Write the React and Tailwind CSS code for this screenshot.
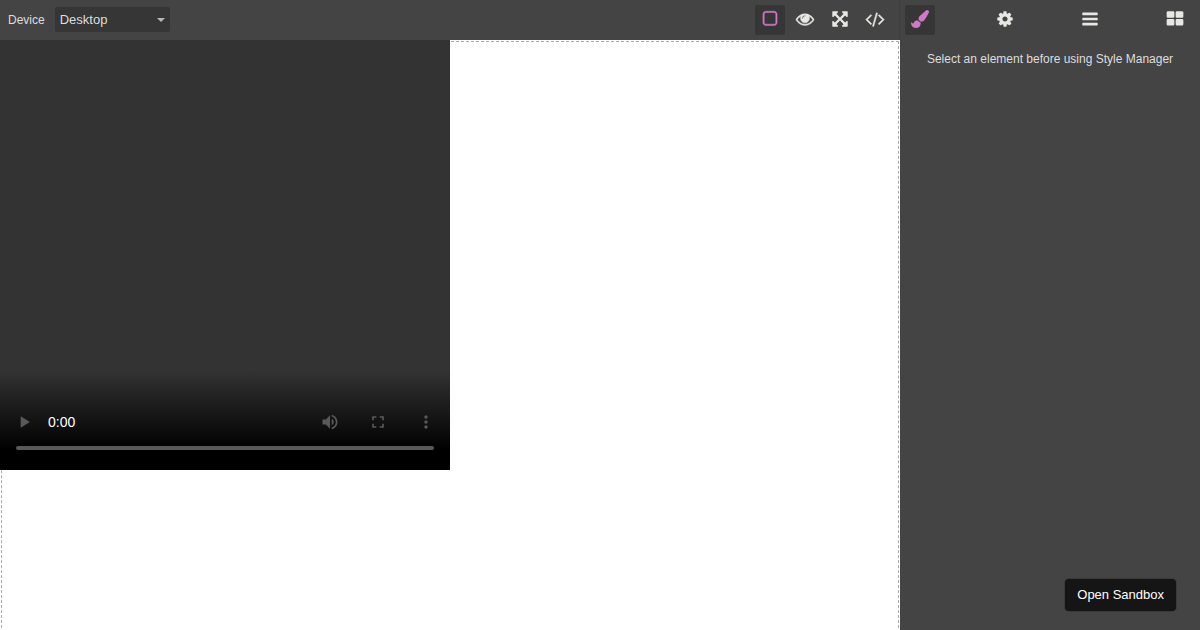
import React, { useState } from 'react';

const PATHS = {
  border:
    'M1312 256h-832q-66 0-113 47t-47 113v832q0 66 47 113t113 47h832q66 0 113-47t47-113v-832q0-66-47-113t-113-47zm288 160v832q0 119-84.5 203.5t-203.5 84.5h-832q-119 0-203.5-84.5t-84.5-203.5v-832q0-119 84.5-203.5t203.5-84.5h832q119 0 203.5 84.5t84.5 203.5z',
  eye:
    'M1664 960q-152-236-381-353 61 104 61 225 0 185-131.5 316.5t-316.5 131.5-316.5-131.5-131.5-316.5q0-121 61-225-229 117-381 353 133 205 333.5 326.5t434.5 121.5 434.5-121.5 333.5-326.5zm-720-384q0-20-14-34t-34-14q-125 0-214.5 89.5t-89.5 214.5q0 20 14 34t34 14 34-14 14-34q0-86 61-147t147-61q20 0 34-14t14-34zm848 384q0 34-20 69-140 230-376.5 368.5t-499.5 138.5-499.5-139-376.5-368q-20-35-20-69t20-69q140-229 376.5-368t499.5-139 499.5 139 376.5 368q20 35 20 69z',
  expand:
    'M1411 541l-355 355 355 355 144-144q29-31 70-14 39 17 39 59v448q0 26-19 45t-45 19h-448q-42 0-59-40-17-39 14-69l144-144-355-355-355 355 144 144q31 30 14 69-17 40-59 40h-448q-26 0-45-19t-19-45v-448q0-42 40-59 39-17 69 14l144 144 355-355-355-355-144 144q-19 19-45 19-12 0-24-5-40-17-40-59v-448q0-26 19-45t45-19h448q42 0 59 40 17 39-14 69l-144 144 355 355 355-355-144-144q-31-30-14-69 17-40 59-40h448q26 0 45 19t19 45v448q0 42-39 59-13 5-25 5-26 0-45-19z',
  code:
    'M553 1399l-50 50q-10 10-23 10t-23-10l-466-466q-10-10-10-23t10-23l466-466q10-10 23-10t23 10l50 50q10 10 10 23t-10 23l-393 393 393 393q10 10 10 23t-10 23zm591-1067l-373 1291q-4 13-15.5 19.5t-23.5 2.5l-62-17q-13-4-19.5-15.5t-2.5-24.5l373-1291q4-13 15.5-19.5t23.5-2.5l62 17q13 4 19.5 15.5t2.5 24.5zm657 651l-466 466q-10 10-23 10t-23-10l-50-50q-10-10-10-23t10-23l393-393-393-393q-10-10-10-23t10-23l50-50q10-10 23-10t23 10l466 466q10 10 10 23t-10 23z',
  brush:
    'M1615 0q70 0 122.5 46.5t52.5 116.5q0 63-45 151-332 629-465 752-97 91-218 91-126 0-216.5-92.5t-90.5-219.5q0-128 92-212l638-579q59-54 130-54zm-909 1034q39 76 106.5 130t150.5 76l1 71q4 213-129.5 347t-348.5 134q-123 0-218-46.5t-152.5-127.5-86.5-183-29-220q7 5 41 30t62 44.5 59 36.5 46 17q41 0 55-37 25-66 57.5-112.5t69.5-76 88-47.5 103-25.5 125-10.5z',
  cog:
    'M1152 896q0-106-75-181t-181-75-181 75-75 181 75 181 181 75 181-75 75-181zm512-109v222q0 12-8 23t-20 13l-185 28q-19 54-39 91 35 50 107 138 10 12 10 25t-9 23q-27 37-99 108t-94 71q-12 0-26-9l-138-108q-44 23-91 38-16 136-29 186-7 28-36 28h-222q-14 0-24.5-8.5t-11.5-21.5l-28-184q-49-16-90-37l-141 107q-10 9-25 9-14 0-25-11-126-114-165-168-7-10-7-23 0-12 8-23 15-21 51-66.5t54-70.5q-27-50-41-99l-183-27q-13-2-21-12.5t-8-23.5v-222q0-12 8-23t19-13l186-28q14-46 39-92-40-57-107-138-10-12-10-24 0-10 9-23 26-36 98.5-107.5t94.5-71.5q13 0 26 10l138 107q44-23 91-38 16-136 29-186 7-28 36-28h222q14 0 24.5 8.5t11.5 21.5l28 184q49 16 90 37l142-107q9-9 24-9 13 0 25 10 129 119 165 170 7 8 7 22 0 12-8 23-15 21-51 66.5t-54 70.5q26 50 41 98l183 28q13 2 21 12.5t8 23.5z',
  bars:
    'M192 256h1408q64 0 64 64v128q0 64-64 64h-1408q-64 0-64-64v-128q0-64 64-64zM192 768h1408q64 0 64 64v128q0 64-64 64h-1408q-64 0-64-64v-128q0-64 64-64zM192 1280h1408q64 0 64 64v128q0 64-64 64h-1408q-64 0-64-64v-128q0-64 64-64z',
  blocks:
    'M192 128h512q128 0 128 128v384q0 128-128 128h-512q-128 0-128-128v-384q0-128 128-128zM1088 128h512q128 0 128 128v384q0 128-128 128h-512q-128 0-128-128v-384q0-128 128-128zM192 896h512q128 0 128 128v384q0 128-128 128h-512q-128 0-128-128v-384q0-128 128-128zM1088 896h512q128 0 128 128v384q0 128-128 128h-512q-128 0-128-128v-384q0-128 128-128z',
};

const MEDIA_PATHS = {
  play: 'M8 5v14l11-7z',
  volume:
    'M3 9v6h4l5 5V4L7 9H3zm13.5 3c0-1.77-1.02-3.29-2.5-4.03v8.05c1.48-.73 2.5-2.25 2.5-4.02zM14 3.23v2.06c2.89.86 5 3.54 5 6.71s-2.11 5.85-5 6.71v2.06c4.01-.91 7-4.49 7-8.77s-2.99-7.86-7-8.77z',
  fullscreen: 'M7 14H5v5h5v-2H7v-3zm-2-4h2V7h3V5H5v5zm12 7h-3v2h5v-5h-2v3zM14 5v2h3v3h2V5h-5z',
  more:
    'M12 8c1.1 0 2-.9 2-2s-.9-2-2-2-2 .9-2 2 .9 2 2 2zm0 2c-1.1 0-2 .9-2 2s.9 2 2 2 2-.9 2-2-.9-2-2-2zm0 6c-1.1 0-2 .9-2 2s.9 2 2 2 2-.9 2-2-.9-2-2-2z',
};

const COMMANDS = [
  { id: 'border', label: 'View components' },
  { id: 'eye', label: 'Preview' },
  { id: 'expand', label: 'Fullscreen' },
  { id: 'code', label: 'View code' },
];

const VIEWS = [
  { id: 'brush', label: 'Open Style Manager' },
  { id: 'cog', label: 'Settings' },
  { id: 'bars', label: 'Open Layer Manager' },
  { id: 'blocks', label: 'Open Blocks' },
];

// thin glyphs get a light outline so they hold up at 18px
const THIN = ['border', 'eye', 'code'];

function PanelButton({ id, label, active, onClick }) {
  return (
    <button
      type="button"
      aria-label={label}
      aria-pressed={active}
      onClick={onClick}
      className={`flex size-[30px] justify-center rounded-xs pt-[5px] ${
        active ? 'bg-[#363636] text-[#d278c9]' : 'text-[#e7e7e3]'
      }`}
    >
      <svg viewBox="0 0 1792 1792" className="size-[18px] overflow-visible fill-current" aria-hidden="true">
        <path d={PATHS[id]} stroke="currentColor" strokeWidth={THIN.includes(id) ? 50 : 0} />
      </svg>
    </button>
  );
}

function MediaButton({ id, label }) {
  return (
    <button type="button" disabled aria-label={label} className="flex size-12 items-center justify-center text-[#59595b]">
      <svg viewBox="0 0 24 24" className="size-5 fill-current" aria-hidden="true">
        <path d={MEDIA_PATHS[id]} />
      </svg>
    </button>
  );
}

function VideoBlock() {
  return (
    <div className="relative flex h-[430px] w-1/2 flex-col justify-end bg-[#333]">
      <div className="bg-linear-to-b from-transparent to-black to-80% pt-7 pb-5">
        <div className="flex h-12 items-center">
          <MediaButton id="play" label="Play" />
          <span className="flex-1 font-['Liberation_Sans',Arial,sans-serif] text-sm text-white">0:00</span>
          <MediaButton id="volume" label="Mute" />
          <MediaButton id="fullscreen" label="Full screen" />
          <MediaButton id="more" label="More options" />
        </div>
        <div className="flex px-4">
          <input
            type="range"
            aria-label="Video time"
            min="0"
            max="100"
            defaultValue="0"
            disabled
            className="h-1 w-full appearance-none rounded-full bg-[#59595b] [&::-webkit-slider-thumb]:size-0 [&::-webkit-slider-thumb]:appearance-none"
          />
        </div>
      </div>
    </div>
  );
}

export default function App() {
  const [device, setDevice] = useState('Desktop');
  const [showBorders, setShowBorders] = useState(true);
  const [view, setView] = useState('brush');

  return (
    <div className="flex h-screen bg-[#444] font-[Helvetica,'Liberation_Sans',Arial,sans-serif] text-xs text-[#ddd]">
      <main className="flex min-w-0 flex-1 flex-col overflow-hidden">
        <header className="flex h-10 shrink-0 items-center justify-between border-r border-[#404040] pr-[9px] pl-2">
          <div className="flex items-center gap-[10px] pb-px">
            <label htmlFor="device">Device</label>
            <div className="relative">
              <select
                id="device"
                value={device}
                onChange={(e) => setDevice(e.target.value)}
                className="block h-[25px] w-[115px] appearance-none rounded-xs bg-[#363636] pl-[5px] text-[13px]"
              >
                <option>Desktop</option>
                <option>Tablet</option>
                <option>Mobile portrait</option>
              </select>
              <svg
                viewBox="0 0 8 4"
                className="pointer-events-none absolute top-[11px] right-[5px] h-1 w-2 fill-[#b4b9bc]"
                aria-hidden="true"
              >
                <path d="M0 0h8L4 4z" />
              </svg>
            </div>
          </div>
          <div className="flex gap-[5px]">
            {COMMANDS.map((cmd) => (
              <PanelButton
                key={cmd.id}
                id={cmd.id}
                label={cmd.label}
                active={cmd.id === 'border' && showBorders}
                onClick={() => cmd.id === 'border' && setShowBorders(!showBorders)}
              />
            ))}
          </div>
        </header>

        <section
          className={`-mb-1 flex-1 bg-white ${showBorders ? 'outline -outline-offset-2 outline-dashed outline-[#aaa]' : ''}`}
        >
          <VideoBlock />
        </section>
      </main>

      <aside className="flex w-1/4 flex-col">
        <nav className="flex h-10 items-center justify-between pr-[10px] pl-[5px]">
          {VIEWS.map((v) => (
            <PanelButton key={v.id} id={v.id} label={v.label} active={view === v.id} onClick={() => setView(v.id)} />
          ))}
        </nav>
        <p className="flex-1 pt-[11px] text-center">Select an element before using Style Manager</p>
        <div className="flex justify-end pr-6 pb-[19px]">
          <a
            href="#sandbox"
            className="flex h-8 items-center rounded-sm bg-[#151515] px-3 text-[13px] text-white ring-1 ring-[#3a3a3a]"
          >
            Open Sandbox
          </a>
        </div>
      </aside>
    </div>
  );
}
